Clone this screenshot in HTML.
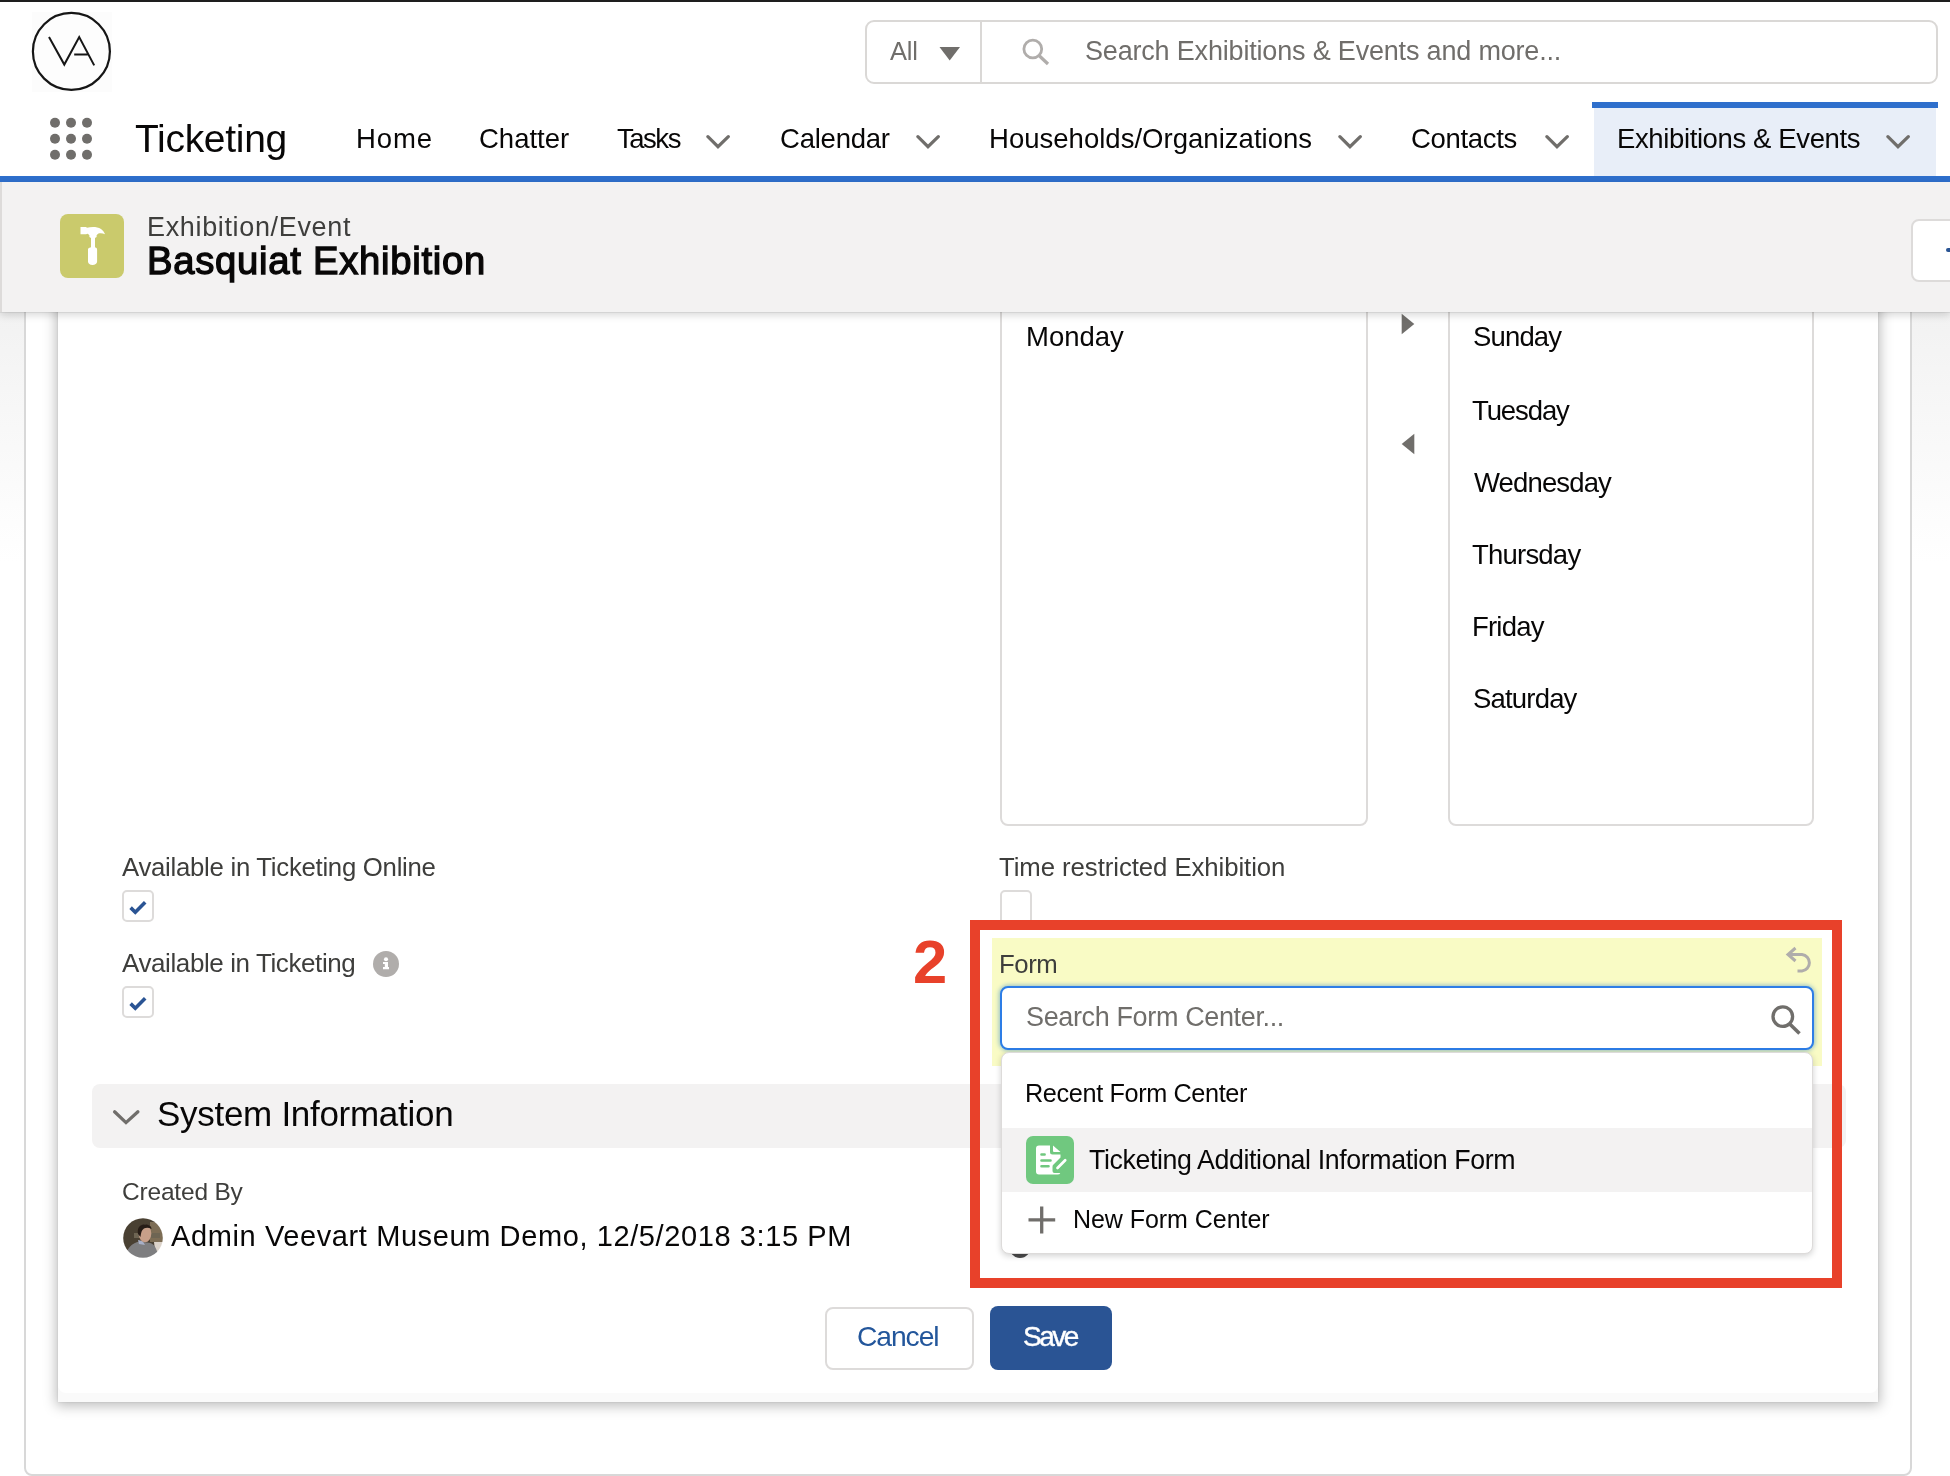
<!DOCTYPE html>
<html><head><meta charset="utf-8">
<style>
html,body{margin:0;padding:0;}
body{width:1950px;height:1476px;position:relative;overflow:hidden;background:#fff;font-family:"Liberation Sans",sans-serif;}
.t{position:absolute;white-space:nowrap;line-height:normal;will-change:transform;}
.a{position:absolute;}
.b{position:absolute;box-sizing:border-box;}
</style></head><body>
<!-- page background strips -->
<div class="b" style="left:0;top:312px;width:24px;height:1164px;background:linear-gradient(#f2f2f2,#fff 250px)"></div>
<div class="b" style="left:1912px;top:312px;width:38px;height:1164px;background:linear-gradient(#f2f2f2,#fff 250px)"></div>
<!-- outer card -->
<div class="b" style="left:24px;top:280px;width:1888px;height:1196px;border:2px solid #d8d8d8;border-radius:8px;background:#fff"></div>
<!-- modal -->
<div class="b" style="left:58px;top:280px;width:1820px;height:1122px;background:#fff;box-shadow:0 0 2px rgba(0,0,0,0.1),0 2px 12px 2px rgba(0,0,0,0.26)"></div>
<div class="b" style="left:58px;top:1385px;width:1820px;height:17px;background:#fafafa"></div><div class="b" style="left:58px;top:1375px;width:1820px;height:18px;background:#fff;border-radius:0 0 8px 8px"></div>

<!-- listboxes -->
<div class="b" style="left:1000px;top:290px;width:368px;height:536px;border:2px solid #dddbda;border-radius:8px"></div>
<div class="b" style="left:1448px;top:290px;width:366px;height:536px;border:2px solid #dddbda;border-radius:8px"></div>
<svg class="a" style="left:1401px;top:313px" width="14" height="22"><path d="M0.7 0.8 L13.3 11 L0.7 21.2Z" fill="#706e6b"/></svg>
<svg class="a" style="left:1401px;top:433px" width="14" height="22"><path d="M13.3 0.8 L0.7 11 L13.3 21.2Z" fill="#706e6b"/></svg>

<!-- checkboxes -->
<div class="b" style="left:122px;top:890px;width:32px;height:32px;border:2px solid #dddbda;border-radius:5px;background:#fff"></div>
<div class="b" style="left:122px;top:986px;width:32px;height:32px;border:2px solid #dddbda;border-radius:5px;background:#fff"></div>
<svg class="a" style="left:122px;top:890px" width="32" height="32"><path d="M8.6 17.6 L13.3 22.2 L23.2 12.3" fill="none" stroke="#2a5494" stroke-width="3.6"/></svg>
<svg class="a" style="left:122px;top:986px" width="32" height="32"><path d="M8.6 17.6 L13.3 22.2 L23.2 12.3" fill="none" stroke="#2a5494" stroke-width="3.6"/></svg>
<svg class="a" style="left:372px;top:950px" width="28" height="28"><circle cx="14" cy="14" r="13" fill="#b0adab"/><circle cx="14" cy="9.2" r="2.05" fill="#fff"/><path d="M11 12.1 H16 V17 H17 V19.3 H11 V17 H12.8 V14.1 H11Z" fill="#fff"/></svg>
<div class="b" style="left:1000px;top:890px;width:32px;height:40px;border:2px solid #dddbda;border-radius:5px;background:#fff"></div>

<!-- system information -->
<div class="b" style="left:91.5px;top:1084px;width:1754px;height:64px;background:#f3f2f2;border-radius:8px"></div>
<svg class="a" style="left:111px;top:1109px" width="30" height="18"><path d="M3.6 2.8 L15 13.6 L26.9 2.8" fill="none" stroke="#706e6b" stroke-width="3.3" stroke-linecap="round"/></svg>
<svg class="a" style="left:122.5px;top:1218px" width="40" height="40" viewBox="0 0 40 40"><defs><clipPath id="avc"><circle cx="20" cy="20" r="19.8"/></clipPath><filter id="avb"><feGaussianBlur stdDeviation="0.7"/></filter></defs>
<g clip-path="url(#avc)"><g filter="url(#avb)"><rect x="-2" y="-2" width="44" height="44" fill="#4a3f31"/><rect x="27" y="4" width="14" height="20" fill="#7d6d55"/><rect x="11" y="15" width="26" height="5" fill="#6e6552"/>
<path d="M31 24 H42 V42 H33Z" fill="#dcd3ca"/>
<path d="M2 42 C3 30 9 24.5 17 23.5 L24 24.5 C31 25 34 29 36 42Z" fill="#7e7e80"/>
<path d="M15 22 L19.5 23 L22 27 L16 26Z" fill="#a8b0c8"/>
<ellipse cx="22" cy="15.5" rx="6.3" ry="8.8" fill="#c79f89"/>
<path d="M15 16 C14 9 17 6.5 22 6.5 C26 6.5 28.5 8 28.5 11 C26 9.5 23 9.5 21 10.5 C18.5 12 18 15 17.5 19Z" fill="#261d18"/></g></g></svg>

<!-- buttons -->
<div class="b" style="left:824.5px;top:1306.5px;width:149px;height:63px;border:2px solid #dddbda;border-radius:8px;background:#fff"></div>
<div class="b" style="left:990px;top:1306px;width:122px;height:64px;border-radius:8px;background:#2a5494"></div>

<!-- red annotation box -->
<div class="b" style="left:970px;top:920px;width:872px;height:368px;border:10px solid #e8412a"></div>
<div class="b" style="left:992px;top:938px;width:830px;height:128px;background:#f9fbc5"></div>
<svg class="a" style="left:1781.5px;top:944px" width="34" height="32"><path d="M13.5 4 L6 10.5 L13.5 17 M6.5 10.5 H20 A8.3 8.3 0 0 1 20 27 H15.5" fill="none" stroke="#b0adab" stroke-width="3"/></svg>
<!-- search input -->
<div class="b" style="left:1000px;top:986px;width:814px;height:64px;border:2px solid #2d7de6;border-radius:8px;background:#fff;box-shadow:0 0 4px 1px rgba(27,120,200,0.45)"></div>
<svg class="a" style="left:1768px;top:1002px" width="36" height="36"><circle cx="14.8" cy="14.6" r="9.8" fill="none" stroke="#706e6b" stroke-width="3.3"/><path d="M21.5 21.8 L31.5 31.5" stroke="#706e6b" stroke-width="3.6"/></svg>
<!-- peeking avatar -->
<div class="b" style="left:1009px;top:1234px;width:22px;height:24px;border-radius:50%;background:#4a4a4a"></div>
<!-- dropdown -->
<div class="b" style="left:1001px;top:1052px;width:812px;height:202px;background:#fff;border:1px solid #dddbda;border-radius:8px;box-shadow:0 2px 6px rgba(0,0,0,0.18)"></div>
<div class="b" style="left:1002px;top:1128px;width:810px;height:64px;background:#f3f2f2"></div>
<svg class="a" style="left:1026px;top:1136px" width="48" height="48" viewBox="0 0 48 48">
<rect width="48" height="48" rx="7" fill="#70c87f"/>
<path d="M13 9.5 H24 V16 A2.5 2.5 0 0 0 26.5 18.5 H34.5 V21.5 L27.5 28.5 A3 3 0 0 0 26.5 31 V35 A2 2 0 0 0 28.5 37 H34.3 Q33.8 38.5 31.5 38.5 H13 A3 3 0 0 1 10 35.5 V12.5 A3 3 0 0 1 13 9.5Z" fill="#fff"/>
<path d="M27 9.5 L34.5 16 H28 A1 1 0 0 1 27 15Z" fill="#fff"/>
<path d="M15.5 18.5 H18.6 M15.5 24.5 H24.5 M15.5 30.3 H22.5" stroke="#70c87f" stroke-width="2.6" stroke-linecap="round"/>
<path d="M31.5 32 L39.2 24.3" stroke="#fff" stroke-width="2.7" stroke-linecap="round"/>
</svg>
<svg class="a" style="left:1028px;top:1206px" width="28" height="28"><path d="M13.7 0.5 V27.5 M0.5 13.8 H27.2" stroke="#706e6b" stroke-width="3.3"/></svg>

<!-- ===== top chrome ===== -->
<div class="b" style="left:0;top:0;width:1950px;height:182px;background:#fff"></div>
<div class="b" style="left:0;top:0;width:1950px;height:2px;background:#1e1e1e"></div>
<div class="b" style="left:32px;top:12px;width:80px;height:80px;background:#fcfcfc"></div><svg class="a" style="left:30px;top:10px" width="84" height="84"><circle cx="41.4" cy="41.4" r="38.5" fill="#fdfdfd" stroke="#161616" stroke-width="2.2"/>
<path d="M19 27 L34.3 54.6 L49.2 27 L64.2 55.4 M44.2 44.6 H57.7" fill="none" stroke="#161616" stroke-width="2"/></svg>
<!-- search -->
<div class="b" style="left:864.5px;top:20px;width:1073px;height:63.5px;border:2px solid #dad8d6;border-radius:9px;background:#fff"></div>
<div class="b" style="left:980px;top:21px;width:2px;height:62px;background:#dad8d6"></div>
<svg class="a" style="left:939px;top:46px" width="22" height="16"><path d="M0.5 1 H21 L10.7 14.5Z" fill="#706e6b"/></svg>
<svg class="a" style="left:1018px;top:34px" width="36" height="36"><circle cx="14.8" cy="15" r="8.9" fill="none" stroke="#b0adab" stroke-width="2.8"/><path d="M21 21.5 L30 30" stroke="#b0adab" stroke-width="3.2"/></svg>
<!-- grid -->
<svg class="a" style="left:45px;top:113px" width="52" height="52">
<circle cx="10" cy="9.8" r="5" fill="#706e6b"/><circle cx="10" cy="25.8" r="5" fill="#706e6b"/><circle cx="10" cy="41.8" r="5" fill="#706e6b"/><circle cx="26" cy="9.8" r="5" fill="#706e6b"/><circle cx="26" cy="25.8" r="5" fill="#706e6b"/><circle cx="26" cy="41.8" r="5" fill="#706e6b"/><circle cx="42" cy="9.8" r="5" fill="#706e6b"/><circle cx="42" cy="25.8" r="5" fill="#706e6b"/><circle cx="42" cy="41.8" r="5" fill="#706e6b"/>
</svg>
<!-- active tab -->
<div class="b" style="left:1594px;top:108px;width:342px;height:68px;background:#e8eef8"></div>
<div class="b" style="left:1592px;top:102px;width:346px;height:6px;background:#2e6fcc"></div>
<div class="b" style="left:0;top:176px;width:1950px;height:6px;background:#2e6fcc"></div>
<svg class="a" style="left:706px;top:135px" width="25" height="15" viewBox="0 0 25 15"><path d="M1.9 1.7 L12 11.7 L22.3 1.7" fill="none" stroke="#706e6b" stroke-width="3.2" stroke-linecap="round"/></svg><svg class="a" style="left:915.8px;top:135px" width="25" height="15" viewBox="0 0 25 15"><path d="M1.9 1.7 L12 11.7 L22.3 1.7" fill="none" stroke="#706e6b" stroke-width="3.2" stroke-linecap="round"/></svg><svg class="a" style="left:1338px;top:135px" width="25" height="15" viewBox="0 0 25 15"><path d="M1.9 1.7 L12 11.7 L22.3 1.7" fill="none" stroke="#706e6b" stroke-width="3.2" stroke-linecap="round"/></svg><svg class="a" style="left:1544.5px;top:135px" width="25" height="15" viewBox="0 0 25 15"><path d="M1.9 1.7 L12 11.7 L22.3 1.7" fill="none" stroke="#706e6b" stroke-width="3.2" stroke-linecap="round"/></svg><svg class="a" style="left:1886px;top:135px" width="25" height="15" viewBox="0 0 25 15"><path d="M1.9 1.7 L12 11.7 L22.3 1.7" fill="none" stroke="#706e6b" stroke-width="3.2" stroke-linecap="round"/></svg>
<!-- page header -->
<div class="b" style="left:0;top:182px;width:1950px;height:130px;background:#f3f2f2;border-left:2px solid #dddbda;box-shadow:0 1px 0 rgba(0,0,0,0.06),0 3px 8px rgba(0,0,0,0.16)"></div>
<div class="b" style="left:1911px;top:218.5px;width:60px;height:63px;border:2px solid #dddbda;border-radius:8px;background:#fff"></div>
<div class="b" style="left:1946px;top:248px;width:6px;height:4px;border-radius:2px;background:#2a5494"></div>
<svg class="a" style="left:60px;top:214px" width="64" height="64" viewBox="0 0 64 64">
<rect width="64" height="64" rx="8" fill="#caca6c"/>
<path d="M20.5 13 H26 L27 13.8 C31 12.8 37 12.5 41 15 C43 16.5 44.5 18.5 45 20.2 C42.5 19.2 40 19 38 19.8 L36.6 21.2 V23 L35 24 V33.2 L36.5 34 C37 34.5 37.1 35 37.1 36 V47.5 C37.1 49.8 35 51 32.5 51 C30 51 28 49.8 28 47.5 V36 C28 35 28.2 34.5 28.8 34 L31 33.2 V24 L29.4 23 V21.2 L27.8 19.8 L26 20.2 H20.5Z" fill="#fff"/>
</svg>
<div class="t" style="left:890.3px;top:37px;font-size:25.5px;letter-spacing:-0.150px;color:#706e6b;">All</div>
<div class="t" style="left:1085.4px;top:36px;font-size:27.0px;letter-spacing:-0.182px;color:#706e6b;">Search Exhibitions &amp; Events and more...</div>
<div class="t" style="left:135.0px;top:117px;font-size:39.0px;letter-spacing:-0.300px;color:#080707;">Ticketing</div>
<div class="t" style="left:356.3px;top:123px;font-size:27.5px;letter-spacing:0.867px;color:#080707;">Home</div>
<div class="t" style="left:479.4px;top:123px;font-size:27.5px;letter-spacing:0.000px;color:#080707;">Chatter</div>
<div class="t" style="left:616.8px;top:123px;font-size:27.5px;letter-spacing:-1.475px;color:#080707;">Tasks</div>
<div class="t" style="left:780.0px;top:123px;font-size:27.5px;letter-spacing:-0.229px;color:#080707;">Calendar</div>
<div class="t" style="left:988.5px;top:123px;font-size:27.5px;letter-spacing:0.022px;color:#080707;">Households/Organizations</div>
<div class="t" style="left:1411.4px;top:123px;font-size:27.5px;letter-spacing:-0.314px;color:#080707;">Contacts</div>
<div class="t" style="left:1617.2px;top:123px;font-size:27.5px;letter-spacing:-0.379px;color:#080707;">Exhibitions &amp; Events</div>
<div class="t" style="left:147.2px;top:212px;font-size:27.0px;letter-spacing:0.653px;color:#3e3e3c;">Exhibition/Event</div>
<div class="t" style="left:146.7px;top:239px;font-size:38.25px;letter-spacing:0.722px;color:#080707;-webkit-text-stroke:1.3px #080707;">Basquiat Exhibition</div>
<div class="t" style="left:1025.9px;top:321px;font-size:27.5px;letter-spacing:-0.020px;color:#080707;">Monday</div>
<div class="t" style="left:1472.7px;top:321px;font-size:27.5px;letter-spacing:-0.840px;color:#080707;">Sunday</div>
<div class="t" style="left:1472.0px;top:395px;font-size:27.5px;letter-spacing:-1.100px;color:#080707;">Tuesday</div>
<div class="t" style="left:1473.7px;top:467px;font-size:27.5px;letter-spacing:-0.863px;color:#080707;">Wednesday</div>
<div class="t" style="left:1472.0px;top:539px;font-size:27.5px;letter-spacing:-0.786px;color:#080707;">Thursday</div>
<div class="t" style="left:1471.7px;top:611px;font-size:27.5px;letter-spacing:-0.800px;color:#080707;">Friday</div>
<div class="t" style="left:1472.7px;top:683px;font-size:27.5px;letter-spacing:-0.814px;color:#080707;">Saturday</div>
<div class="t" style="left:122.0px;top:853px;font-size:25.75px;letter-spacing:-0.275px;color:#3e3e3c;">Available in Ticketing Online</div>
<div class="t" style="left:122.0px;top:948px;font-size:26.0px;letter-spacing:-0.405px;color:#3e3e3c;">Available in Ticketing</div>
<div class="t" style="left:999.0px;top:853px;font-size:25.75px;letter-spacing:-0.068px;color:#3e3e3c;">Time restricted Exhibition</div>
<div class="t" style="left:999.0px;top:950px;font-size:25.75px;letter-spacing:-0.433px;color:#3e3e3c;">Form</div>
<div class="t" style="left:1025.5px;top:1002px;font-size:27.0px;letter-spacing:-0.365px;color:#706e6b;">Search Form Center...</div>
<div class="t" style="left:1025.3px;top:1079px;font-size:25.25px;letter-spacing:-0.371px;color:#080707;">Recent Form Center</div>
<div class="t" style="left:1089.4px;top:1145px;font-size:26.75px;letter-spacing:-0.392px;color:#080707;">Ticketing Additional Information Form</div>
<div class="t" style="left:1072.5px;top:1205px;font-size:25.0px;letter-spacing:-0.050px;color:#080707;">New Form Center</div>
<div class="t" style="left:156.5px;top:1094px;font-size:35.0px;letter-spacing:-0.288px;color:#080707;">System Information</div>
<div class="t" style="left:121.7px;top:1178px;font-size:24.5px;letter-spacing:-0.189px;color:#3e3e3c;">Created By</div>
<div class="t" style="left:170.5px;top:1220px;font-size:29.0px;letter-spacing:0.605px;color:#080707;">Admin Veevart Museum Demo, 12/5/2018 3:15 PM</div>
<div class="t" style="left:857.3px;top:1320px;font-size:28.25px;letter-spacing:-1.080px;color:#23569b;">Cancel</div>
<div class="t" style="left:1022.5px;top:1321px;font-size:28.0px;letter-spacing:-2.533px;color:#ffffff;-webkit-text-stroke:0.4px #fff;">Save</div>
<div class="t" style="left:912.5px;top:926px;font-size:61.5px;letter-spacing:0.000px;color:#e8412a;font-weight:bold;">2</div>

</body></html>
